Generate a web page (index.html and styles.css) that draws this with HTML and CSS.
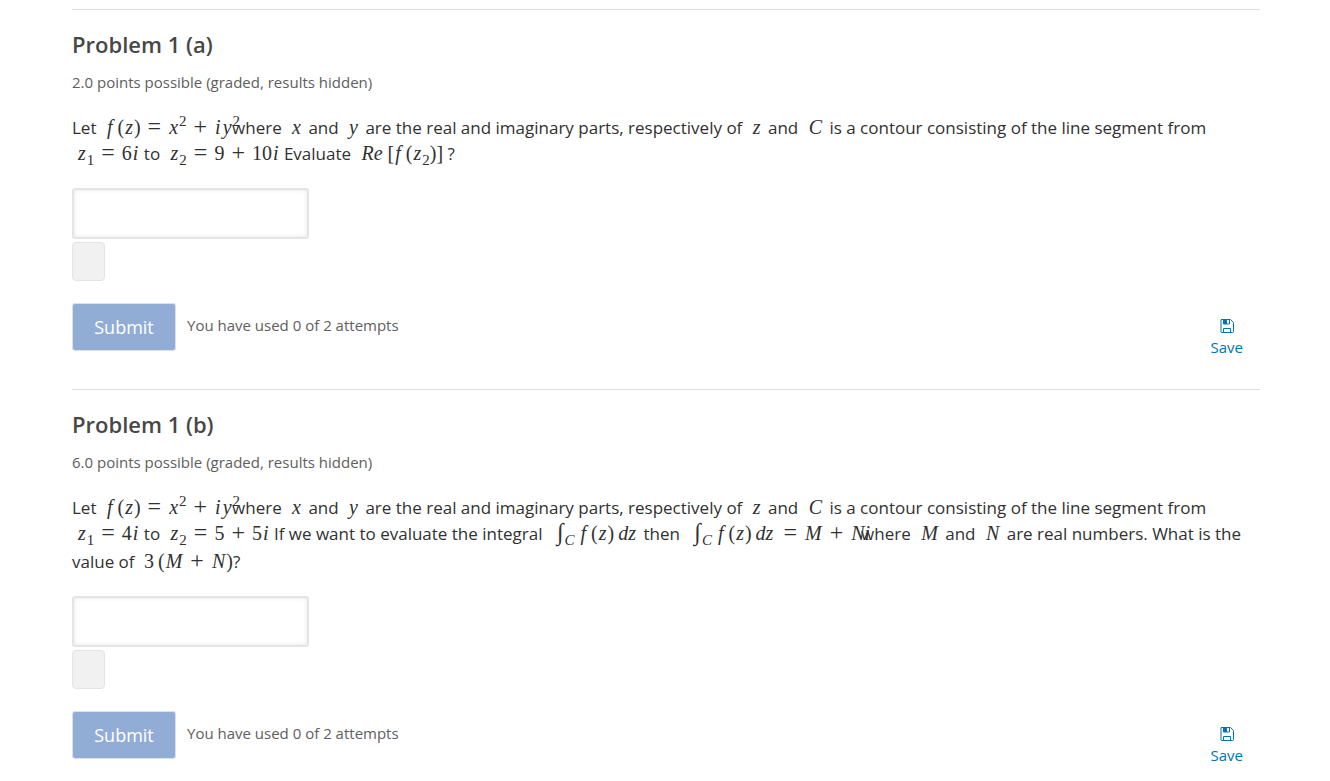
FILE: index.html
```html
<!DOCTYPE html>
<html lang="en">
<head>
    <meta charset="UTF-8">
    <meta name="viewport" content="width=device-width, initial-scale=1.0">
    <title>Problem 1</title>
    <link rel="stylesheet" href="styles.css">
</head>
<body>

<main class="container">
    <section class="problem">
        <h2>Problem 1 (a)</h2>
        <p class="progress">2.0 points possible (graded, results hidden)</p>
        <form onsubmit="return false">
            <p class="question" id="question-a">
                Let <span class="math overlap"><i class="f">f</i>(<i>z</i>)<b>=</b><i>x</i><sup>2</sup><b>+</b><i>i</i><i>y</i><sup>2</sup></span>where <span class="math var"><i>x</i></span> and <span class="math var"><i>y</i></span> are the real and imaginary parts, respectively of <span class="math var"><i>z</i></span> and <span class="math var"><i>C</i></span> is a contour consisting of the line segment from<br>
                <span class="math"><i>z</i><sub>1</sub><b>=</b>6<i>i</i></span> to <span class="math"><i>z</i><sub>2</sub><b>=</b>9<b>+</b>10<i>i</i></span> Evaluate <span class="math"><i>Re</i><span class="bracket">[</span><i class="f">f</i>(<i>z</i><sub>2</sub>)]</span> ?
            </p>
            <input type="text" class="answer" aria-labelledby="question-a">
            <span class="status"></span>
            <div class="action">
                <button type="submit" class="submit" disabled>Submit</button>
                <span class="feedback">You have used 0 of 2 attempts</span>
                <button type="button" class="save">
                    <svg width="14" height="14" viewBox="0 0 14 14" fill="none" stroke="currentColor"><path d="M1 .5h9.500l3 3v9a1 1 0 0 1-1 1h-11a.5 .5 0 0 1-.5-.5v-12a.5 .5 0 0 1 .5-.5zM3.500 .5v4.500h6v-4.500M3.500 13.500v-4h7v4"/><path fill="currentColor" stroke="none" d="M3.500 1h3.500v4h-3.500z"/></svg>
                    Save
                </button>
            </div>
        </form>
    </section>

    <section class="problem">
        <h2>Problem 1 (b)</h2>
        <p class="progress">6.0 points possible (graded, results hidden)</p>
        <form onsubmit="return false">
            <p class="question" id="question-b">
                Let <span class="math overlap"><i class="f">f</i>(<i>z</i>)<b>=</b><i>x</i><sup>2</sup><b>+</b><i>i</i><i>y</i><sup>2</sup></span>where <span class="math var"><i>x</i></span> and <span class="math var"><i>y</i></span> are the real and imaginary parts, respectively of <span class="math var"><i>z</i></span> and <span class="math var"><i>C</i></span> is a contour consisting of the line segment from<br>
                <span class="math"><i>z</i><sub>1</sub><b>=</b>4<i>i</i></span> to <span class="math"><i>z</i><sub>2</sub><b>=</b>5<b>+</b>5<i>i</i></span> If we want to evaluate the integral <span class="math integral"><span class="int">∫</span><sub><i>C</i></sub><i class="f">f</i>(<i>z</i>)<i class="d">dz</i></span> then <span class="math integral overlap-wide"><span class="int">∫</span><sub><i>C</i></sub><i class="f">f</i>(<i>z</i>)<i class="d">dz</i><b>=</b><i>M</i><b>+</b><i>Ni</i></span>where <span class="math var"><i>M</i></span> and <span class="math var"><i>N</i></span> are real numbers. What is the<br>
                value of <span class="math">3<span class="bracket">(</span><i>M</i><b>+</b><i>N</i>)</span>?
            </p>
            <input type="text" class="answer" aria-labelledby="question-b">
            <span class="status"></span>
            <div class="action">
                <button type="submit" class="submit" disabled>Submit</button>
                <span class="feedback">You have used 0 of 2 attempts</span>
                <button type="button" class="save">
                    <svg width="14" height="14" viewBox="0 0 14 14" fill="none" stroke="currentColor"><path d="M1 .5h9.500l3 3v9a1 1 0 0 1-1 1h-11a.5 .5 0 0 1-.5-.5v-12a.5 .5 0 0 1 .5-.5zM3.500 .5v4.500h6v-4.500M3.500 13.500v-4h7v4"/><path fill="currentColor" stroke="none" d="M3.500 1h3.500v4h-3.500z"/></svg>
                    Save
                </button>
            </div>
        </form>
    </section>
</main>

</body>
</html>
```
FILE: styles.css
```css
* {
    box-sizing: border-box;
}

body {
    margin: 0;
    background-color: #fff;
    color: #313131;
    font-family: "Open Sans", "Noto Sans", sans-serif;
    font-size: 17px;
}

.container {
    padding: 9px 70px 0 72px;
}

.problem {
    border-top: 1px solid #ddd;
    padding-top: 19px;
    margin-bottom: 32px;
}

h2 {
    margin: 0;
    font-size: 22px;
    font-weight: 600;
    line-height: 30px;
    color: #474747;
}

.progress {
    margin: 13px 0 23px;
    font-size: 15px;
    line-height: 20px;
    color: #5e5e5e;
}

.question {
    margin: 0 0 21px;
    line-height: 26px;
    white-space: nowrap;
}

/* formulas */
.math {
    margin-left: 5px;
    font-family: "Liberation Serif", serif;
    font-size: 20px;
    line-height: 20px;
}

.math b {
    margin: 0 7px;
    font-size: 24px;
    font-weight: normal;
    line-height: 0;
}

.math i {
    margin: 0 1px;
}

.math sup,
.math sub {
    font-size: 15px;
    line-height: 0;
}

.math .f {
    margin-right: 5px;
}

.math .d,
.math .bracket {
    margin-left: 4px;
}

.math .int {
    font-size: 24px;
}

.var {
    margin-right: 2px;
}

.integral {
    margin-left: 10px;
}

.integral sub {
    margin-right: 4px;
    line-height: 18px;
}

.integral .d {
    margin-right: 3px;
}

.overlap {
    margin-right: -8px;
}

.overlap-wide {
    margin-right: -10px;
}

/* answer box */
.answer {
    display: block;
    width: 237px;
    height: 51px;
    padding: 10px;
    border: 2px solid #e4e4e4;
    border-radius: 3px;
    box-shadow: inset 0 0 4px rgba(0, 0, 0, 0.1);
    font: inherit;
}

.status {
    display: block;
    width: 33px;
    height: 39px;
    margin-top: 3px;
    border: 1px solid #e4e4e4;
    border-radius: 4px;
    background-color: #f1f1f1;
}

.action {
    display: flex;
    align-items: flex-start;
    margin-top: 22px;
}

.submit {
    width: 104px;
    height: 48px;
    border: 1px solid #d9e1ee;
    border-radius: 3px;
    background-color: #92add5;
    color: #fff;
    font-family: inherit;
    font-size: 18px;
}

.feedback {
    margin: 12px 0 0 11px;
    font-size: 15px;
    line-height: 20px;
    color: #5e5e5e;
}

.save {
    display: flex;
    flex-direction: column;
    align-items: center;
    gap: 4px;
    margin: 16px 17px 0 auto;
    padding: 0;
    border: 0;
    background: none;
    color: #0075b4;
    font-family: inherit;
    font-size: 15px;
    line-height: 20px;
}
```
